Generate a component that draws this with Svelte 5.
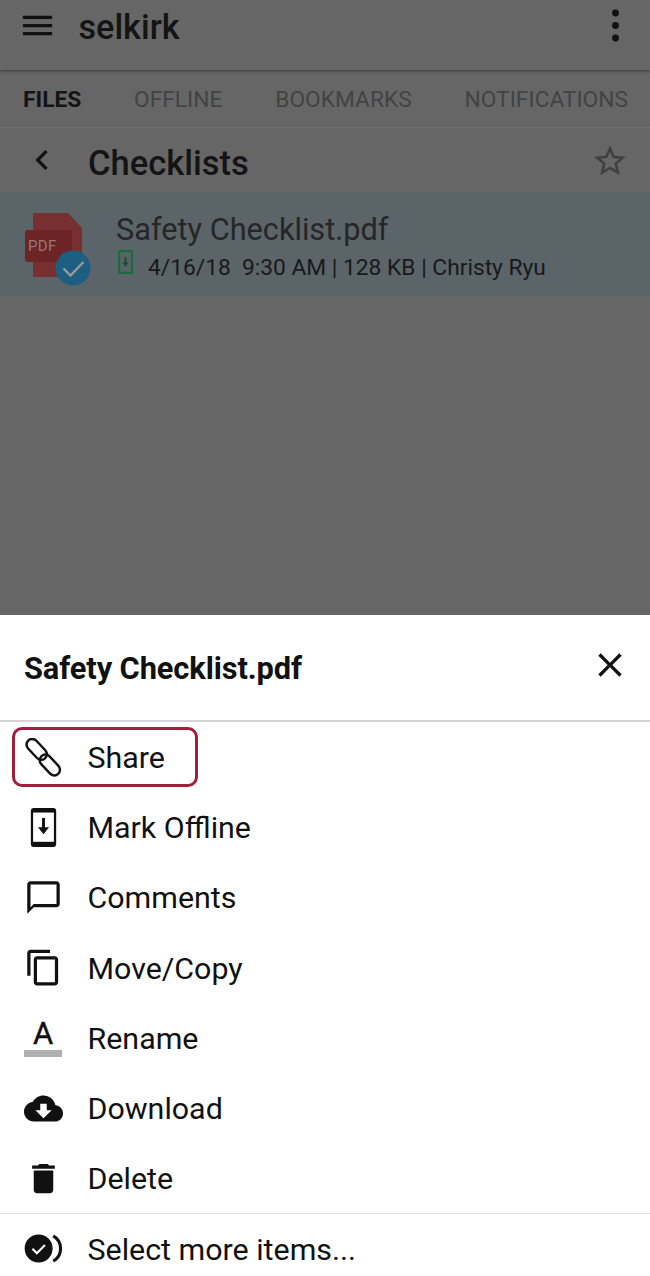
<script>
  const tabs = ['FILES', 'OFFLINE', 'BOOKMARKS', 'NOTIFICATIONS'];
  const items = [
    { id: 'share', label: 'Share' },
    { id: 'offline', label: 'Mark Offline' },
    { id: 'comments', label: 'Comments' },
    { id: 'move', label: 'Move/Copy' },
    { id: 'rename', label: 'Rename' },
    { id: 'download', label: 'Download' },
    { id: 'delete', label: 'Delete' }
  ];
</script>

{#snippet icon(id)}
  {#if id === 'rename'}
    <div class="rename-icon" aria-hidden="true">
      <span>A</span>
      <i></i>
    </div>
  {:else}
    <svg class="icon" viewBox="0 0 24 24" aria-hidden="true">
      {#if id === 'share'}
        <g fill="none" stroke="#111" stroke-width="1.5">
          <rect x="-7.5" y="-3.5" width="15" height="7" rx="3.5" transform="translate(7.8 7) rotate(47)" />
          <rect x="-7.5" y="-3.5" width="15" height="7" rx="3.5" transform="translate(15.9 16.6) rotate(47)" />
        </g>
      {:else if id === 'offline'}
        <rect x="4.2" y="0" width="15.6" height="24" rx="1.8" fill="#111" />
        <rect x="5.6" y="2.8" width="12.8" height="18" fill="#fff" />
        <path d="M11.1 6.2h1.8v5.6h2.5L12 16.2l-3.4-4.4h2.5z" fill="#111" />
      {:else if id === 'comments'}
        <path d="M20 2H4c-1.1 0-2 .9-2 2v18l4-4h14c1.1 0 2-.9 2-2V4c0-1.1-.9-2-2-2zm0 14H6l-2 2V4h16v12z" fill="#111" />
      {:else if id === 'move'}
        <path d="M16 1H4c-1.1 0-2 .9-2 2v14h2V3h12V1zm3 4H8c-1.1 0-2 .9-2 2v14c0 1.1.9 2 2 2h11c1.1 0 2-.9 2-2V7c0-1.1-.9-2-2-2zm0 16H8V7h11v14z" fill="#111" />
      {:else if id === 'download'}
        <path d="M19.35 10.04C18.67 6.59 15.64 4 12 4 9.11 4 6.6 5.64 5.35 8.04 2.34 8.36 0 10.91 0 14c0 3.31 2.69 6 6 6h13c2.76 0 5-2.24 5-5 0-2.64-2.05-4.78-4.65-4.96zM17 13l-5 5-5-5h3V9h4v4h3z" fill="#111" />
      {:else if id === 'delete'}
        <path d="M6 19c0 1.1.9 2 2 2h8c1.1 0 2-.9 2-2V7H6v12zM19 4h-3.5l-1-1h-5l-1 1H5v2h14V4z" fill="#111" />
      {:else if id === 'select'}
        <circle cx="9" cy="12" r="8.6" fill="#111" />
        <path d="M5.2 12.2l2.7 2.7 5-5" fill="none" stroke="#fff" stroke-width="1.3" />
        <path d="M18 4.2A9 9 0 0 1 18 19.8" fill="none" stroke="#111" stroke-width="1.9" />
      {/if}
    </svg>
  {/if}
{/snippet}

<div class="page">
  <div class="dim">
    <header class="appbar">
      <svg class="bar-icon" viewBox="0 0 24 24"><path d="M3 18h18v-2H3v2zm0-5h18v-2H3v2zm0-7v2h18V6H3z" fill="#111" /></svg>
      <h1>selkirk</h1>
      <svg class="bar-icon more" viewBox="0 0 24 24"><circle cx="12" cy="4.3" r="2.1" fill="#111" /><circle cx="12" cy="12" r="2.1" fill="#111" /><circle cx="12" cy="19.7" r="2.1" fill="#111" /></svg>
    </header>
    <nav class="tabs">
      {#each tabs as t, i}
        <span class:active={i === 0}>{t}</span>
      {/each}
    </nav>
    <div class="crumb">
      <svg class="chev" viewBox="0 0 24 24"><path d="M15.41 7.41 14 6l-6 6 6 6 1.41-1.41L10.83 12z" fill="#111" /></svg>
      <h2>Checklists</h2>
      <svg class="star" viewBox="0 0 24 24"><path d="M22 9.24l-7.19-.62L12 2 9.19 8.63 2 9.24l5.46 4.73L5.82 21 12 17.27 18.18 21l-1.63-7.03L22 9.24zM12 15.4l-3.76 2.27 1-4.28-3.32-2.88 4.38-.38L12 6.1l1.71 4.04 4.38.38-3.32 2.88 1 4.28L12 15.4z" fill="#3f3f3f" /></svg>
    </div>
    <div class="file">
      <svg class="pdf" viewBox="0 0 72 84">
        <path d="M9 11h35l14 15v49H9z" fill="#75302f" />
        <path d="M4 28h44v32H4a3 3 0 0 1-3-3V31a3 3 0 0 1 3-3z" fill="#6c2425" />
        <text class="pdf-label" x="4" y="49">PDF</text>
        <circle cx="49" cy="66" r="17.5" fill="#1d5f82" />
        <path d="M39.5 66.5l7 7 13-13.5" fill="none" stroke="#9a9a9a" stroke-width="2.4" />
      </svg>
      <div class="file-text">
        <div class="name">Safety Checklist.pdf</div>
        <div class="meta">
          <svg class="mini" viewBox="0 0 15 24">
            <rect x="1" y="1" width="13" height="22" rx="1" fill="none" stroke="#1c6a3f" stroke-width="2.4" />
            <path d="M6.4 7h2.2v5.4h2.2L7.5 17l-3.3-4.6h2.2z" fill="#174f31" />
          </svg>
          <span>4/16/18&nbsp; 9:30 AM | 128 KB | Christy Ryu</span>
        </div>
      </div>
    </div>
  </div>

  <section class="sheet">
    <div class="sheet-head">
      <h3>Safety Checklist.pdf</h3>
      <svg class="close" viewBox="0 0 24 24"><path d="M19 6.41 17.59 5 12 10.59 6.41 5 5 6.41 10.59 12 5 17.59 6.41 19 12 13.41 17.59 19 19 17.59 13.41 12z" fill="#111" /></svg>
    </div>
    <ul>
      {#each items as it}
        <li class:highlight={it.id === 'share'}>
          {@render icon(it.id)}
          <span>{it.label}</span>
        </li>
      {/each}
      <li class="more-row">
        {@render icon('select')}
        <span>Select more items...</span>
      </li>
    </ul>
  </section>
</div>

<style>
  :global(body) {
    margin: 0;
    background: #666;
  }
  .page {
    width: 650px;
    height: 1276px;
    overflow: hidden;
    display: flex;
    flex-direction: column;
    font-family: Roboto, "Liberation Sans", sans-serif;
    color: #111;
  }
  h1, h2, h3 {
    margin: 0;
    font-weight: 500;
  }
  .dim {
    height: 615px;
    flex: none;
    background: #666;
  }
  .appbar {
    height: 70px;
    box-sizing: border-box;
    padding: 0 15px 20px 18px;
    display: flex;
    align-items: center;
    background: #666;
    box-shadow: 0 1px 3px rgba(0, 0, 0, 0.45);
    position: relative;
  }
  .bar-icon {
    width: 39px;
    height: 39px;
    flex: none;
  }
  .appbar h1 {
    font-size: 34.2px;
    line-height: 40px;
    margin: 4px 0 0 21.5px;
    flex: 1;
    color: #141414;
  }
  .tabs {
    height: 58px;
    box-sizing: border-box;
    padding: 2px 0 0 23px;
    display: flex;
    align-items: center;
    gap: 52.8px;
    font-size: 22.75px;
    color: #434343;
    border-bottom: 1px solid #6d6d6d;
    white-space: nowrap;
  }
  .tabs .active {
    color: #141414;
    font-weight: 700;
  }
  .crumb {
    height: 64px;
    display: flex;
    align-items: center;
    padding: 0 21px 0 22px;
  }
  .chev {
    width: 40px;
    height: 40px;
    flex: none;
  }
  .crumb h2 {
    font-size: 34.5px;
    margin: 5px 0 0 26px;
    flex: 1;
    color: #141414;
  }
  .star {
    width: 38px;
    height: 38px;
    flex: none;
    margin-top: 2px;
  }
  .file {
    height: 104px;
    background: #5b6469;
    display: flex;
    align-items: center;
    padding-left: 24px;
    gap: 20px;
  }
  .pdf {
    width: 72px;
    height: 84px;
    flex: none;
  }
  .pdf-label {
    font-size: 15px;
    fill: #96787a;
    letter-spacing: 0.3px;
  }
  .file-text {
    padding-top: 7px;
  }
  .name {
    font-size: 30.7px;
    line-height: 36px;
    color: #262626;
  }
  .meta {
    display: flex;
    align-items: center;
    gap: 15px;
    font-size: 22.75px;
    line-height: 30px;
    margin-top: 5px;
    color: #191919;
    padding-left: 2px;
    white-space: nowrap;
  }
  .mini {
    width: 15px;
    height: 24px;
    flex: none;
    margin-top: -12px;
  }
  .sheet {
    flex: 1;
    background: #fff;
  }
  .sheet-head {
    height: 107px;
    box-sizing: border-box;
    padding: 0 20px 0 24px;
    display: flex;
    align-items: center;
    justify-content: space-between;
    border-bottom: 2px solid #d4d4d4;
  }
  .sheet-head h3 {
    font-size: 30.8px;
    font-weight: 700;
    letter-spacing: -0.1px;
    margin-top: 1px;
  }
  .close {
    width: 40px;
    height: 40px;
    margin-top: -6px;
  }
  ul {
    list-style: none;
    margin: 0;
    padding: 0;
  }
  li {
    height: 70.2px;
    box-sizing: border-box;
    display: flex;
    align-items: center;
    padding-left: 23.5px;
    gap: 25px;
    font-size: 30.4px;
    position: relative;
  }
  li > span {
    margin-top: 1px;
  }
  .icon {
    width: 39px;
    height: 39px;
    flex: none;
  }
  .rename-icon {
    width: 39px;
    height: 39px;
    flex: none;
    display: flex;
    flex-direction: column;
    align-items: center;
  }
  .rename-icon span {
    font-size: 31px;
    line-height: 32px;
    height: 32px;
    margin: 0;
    -webkit-text-stroke: 0.4px #111;
  }
  .rename-icon i {
    display: block;
    width: 38px;
    height: 7px;
    background: #b0b0b0;
  }
  .highlight::after {
    content: "";
    position: absolute;
    left: 12px;
    top: 5px;
    width: 186px;
    height: 60px;
    box-sizing: border-box;
    border: 3px solid #a01f3b;
    border-radius: 10px;
  }
  .more-row {
    border-top: 1px solid #e3e3e3;
  }
</style>
